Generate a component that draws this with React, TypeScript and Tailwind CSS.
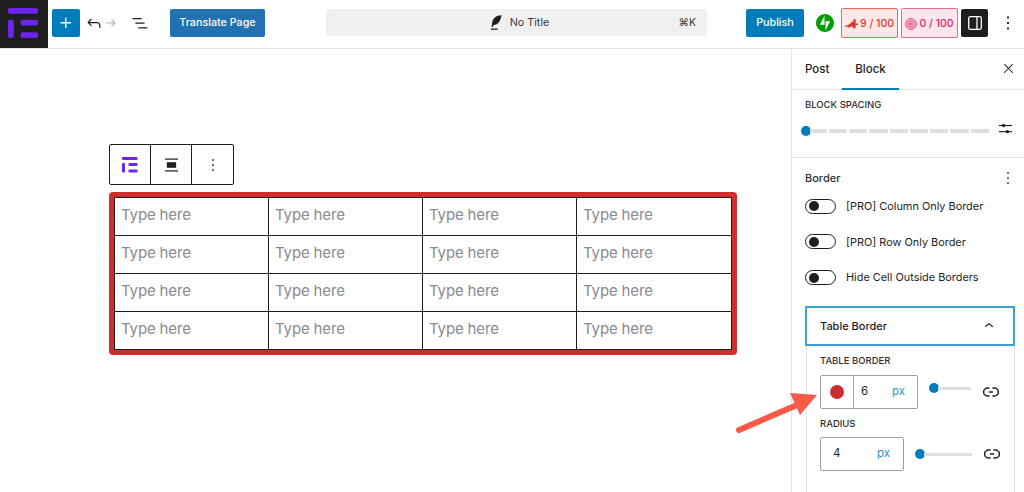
const Logo = ({ className, color }: { className: string; color: string }) => (
  <svg viewBox="0 0 32 32" className={className} fill={color}>
    <rect x="0" y="0" width="31" height="6" rx="2" />
    <rect x="0" y="12" width="6" height="19" rx="2" />
    <rect x="13" y="12" width="18" height="6" rx="2" />
    <rect x="13" y="25" width="18" height="6" rx="2" />
  </svg>
);

const WpIcon = ({ d, className }: { d: string; className: string }) => (
  <svg viewBox="0 0 24 24" className={className} fill="currentColor">
    <path d={d} />
  </svg>
);

const DOTS = "M13 19h-2v-2h2v2zm0-6h-2v-2h2v2zm0-6h-2V5h2v2z";

const LinkIcon = () => (
  <svg viewBox="0 0 16 10" className="w-4 h-[10px] text-[#1e1e1e]" fill="none" stroke="currentColor" strokeWidth="1.5">
    <path d="M6.5 1H4.6a3.6 3.6 0 0 0 0 8h1.9M9.5 1h1.9a3.6 3.6 0 0 1 0 8H9.5M6 5h4" />
  </svg>
);

const Toggle = ({ label }: { label: string }) => (
  <div className="flex items-center h-4 gap-[10px]">
    <div className="w-[31px] h-[15px] rounded-full border border-[#1e1e1e] flex items-center pl-[3px] shrink-0">
      <div className="w-[10px] h-[10px] rounded-full bg-[#1e1e1e]" />
    </div>
    <span className="text-[10.9px] text-[#1e1e1e] whitespace-nowrap">{label}</span>
  </div>
);

const Thumb = () => <div className="w-[10px] h-[10px] rounded-full bg-[#007cba] shrink-0" />;

export default function App() {
  const rows = [0, 1, 2, 3];
  const colClass = ["w-[153px]", "w-[154px] border-l border-[#1e1e1e]", "w-[154px] border-l border-[#1e1e1e]", "flex-1 border-l border-[#1e1e1e]"];
  return (
    <div className="relative w-[1024px] h-[492px] overflow-hidden bg-white font-['Inter',sans-serif] text-[#1e1e1e]">
      <header className="h-[49px] flex items-center border-b border-[#e4e4e4] pb-[2px]">
        <div className="w-[48px] h-[48px] bg-[#1e1e1e] flex items-center justify-center shrink-0 self-start pr-[1px] pb-[2px]">
          <Logo className="w-[31px] h-[31px]" color="#6b25ee" />
        </div>
        <div className="ml-[4px] w-[28px] h-[28px] bg-[#007cba] rounded-[2px] flex items-center justify-center text-white">
          <WpIcon className="w-[22px] h-[22px]" d="M11 12.5V17.5H12.5V12.5H17.5V11H12.5V6H11V11H6V12.5H11Z" />
        </div>
        <WpIcon className="ml-[4px] w-[20px] h-[20px] text-[#1e1e1e]" d="M18.3 11.7c-.6-.6-1.4-.9-2.3-.9H6.7l2.9-3.3-1.1-1-4.5 5L8.5 16l1-1-2.7-2.7H16c.5 0 .9.2 1.3.5 1 1 1 3.4 1 4.5v.3h1.5v-.2c0-1.5 0-4.3-1.5-5.7z" />
        <svg viewBox="0 0 10 10" className="ml-[2px] w-[10px] h-[10px] text-[#b5b5b5]" fill="none" stroke="currentColor" strokeWidth="1.1">
          <path d="M0 5h8.5M5.5 1.5 9 5 5.5 8.5" />
        </svg>
        <WpIcon className="ml-[14px] w-[20px] h-[20px] text-[#1e1e1e]" d="M3 6h11v1.5H3V6Zm3.5 5.5h11V13h-11v-1.5ZM21 17H10v1.5h11V17Z" />
        <div className="ml-[20px] w-[95px] h-[28px] pt-[1px] bg-[#2271b1] rounded-[2px] flex items-center justify-center text-white text-[10.75px] font-medium">
          Translate Page
        </div>
        <div className="ml-[61px] self-start mt-[9px] w-[381px] h-[27px] pt-[1px] bg-[#f0f0f0] rounded-[3px] flex items-center relative text-[#3a3a3a]">
          <div className="flex-1 flex items-center justify-center gap-[8px] text-[10.75px] pl-[6px]">
            <svg viewBox="0 0 14 18" className="w-[12px] h-[17px] -mt-[1px]" fill="#1e1e1e">
              <path d="M13.5 0.500C7 0.500 3 4.500 2.500 9.500L1.800 14L3.300 14.200L4.200 11.800C9 12 12 8 13.500 0.500Z" />
              <rect x="1" y="16" width="8" height="1.500" />
            </svg>
            <span>No Title</span>
          </div>
          <span className="absolute right-[11px] text-[10.5px]">⌘K</span>
        </div>
        <div className="ml-[39px] w-[58px] h-[28px] pt-[1px] bg-[#007cba] rounded-[2px] flex items-center justify-center text-white text-[10.75px] font-medium">
          Publish
        </div>
        <svg viewBox="0 0 32 32" className="ml-[12px] w-[18px] h-[18px]" fill="#069e08">
          <path d="M16 0C7.200 0 0 7.200 0 16s7.200 16 16 16 16-7.200 16-16S24.800 0 16 0zM15 19H7l8-16v16zm2 10V13h8l-8 16z" />
        </svg>
        <div className="ml-[7px] self-start mt-[8px] w-[57px] h-[30px] pt-[1px] bg-[#fde8e8] border border-[#f0635d] rounded-[2px] flex items-center justify-center gap-[2px] text-[#e5332e] text-[10.5px] font-medium">
          <svg viewBox="0 0 14 10" className="w-[13px] h-[10px]" fill="#e5332e">
            <path d="M0 6.500h3L5 4.500h1.500V2.500H9V0h2.500v4.500H14V6H11.500V9.500H8.500V8H5.500L4 9.500 3.500 8H0z" />
          </svg>
          <span className="whitespace-nowrap">9 / 100</span>
        </div>
        <div className="ml-[3px] self-start mt-[8px] w-[57px] h-[30px] pt-[1px] bg-[#fde6ee] border border-[#ee6a96] rounded-[2px] flex items-center justify-center gap-[2px] text-[#e5245f] text-[10.5px] font-medium">
          <svg viewBox="0 0 12 12" className="w-[12px] h-[12px]" fill="none" stroke="#e5245f" strokeWidth="1">
            <circle cx="6" cy="6" r="5.300" />
            <circle cx="6" cy="6" r="3.200" />
            <circle cx="6" cy="6" r="1.200" />
          </svg>
          <span className="whitespace-nowrap">0 / 100</span>
        </div>
        <div className="ml-[3px] w-[27px] h-[28px] bg-[#1e1e1e] rounded-[2px] flex items-center justify-center">
          <svg viewBox="0 0 14 14" className="w-[14px] h-[14px]" fill="none" stroke="white" strokeWidth="1.300">
            <rect x="0.700" y="0.700" width="12.600" height="12.600" rx="1.500" />
            <path d="M9 0.700V13.300" />
          </svg>
        </div>
        <WpIcon className="ml-[9px] w-[22px] h-[22px] text-[#1e1e1e]" d={DOTS} />
      </header>

      <div className="flex h-[443px]">
        <main className="w-[791px] shrink-0 pt-[95px] pl-[109px]">
          <div className="w-[125px] h-[41px] border border-[#1e1e1e] rounded-[2px] flex">
            <div className="w-[41px] border-r border-[#1e1e1e] flex items-center justify-center">
              <Logo className="w-[16px] h-[16px]" color="#6b25ee" />
            </div>
            <div className="w-[41px] border-r border-[#1e1e1e] flex items-center justify-center">
              <svg viewBox="0 0 14 14" className="w-[13px] h-[14px]" fill="#1e1e1e">
                <rect x="0" y="0" width="14" height="1.300" />
                <rect x="2" y="4" width="10" height="6" />
                <rect x="0" y="12.700" width="14" height="1.300" />
              </svg>
            </div>
            <div className="flex-1 flex items-center justify-center">
              <WpIcon className="w-[20px] h-[20px] text-[#1e1e1e]" d={DOTS} />
            </div>
          </div>
          <div className="mt-[7px] w-[628px] h-[163px] border-[5px] border-[#cf2e2e] rounded-[4px]">
            <div className="border border-[#1e1e1e] w-full h-full flex flex-col">
              {rows.map((r) => (
                <div key={r} className={`flex ${r > 0 ? "h-[38px] border-t border-[#1e1e1e]" : "h-[37px]"}`}>
                  {colClass.map((c) => (
                    <div key={c + r} className={`flex items-center pl-[6px] pb-[2px] text-[15px] tracking-[-0.15px] text-[#8a8a8f] ${c}`}>
                      Type here
                    </div>
                  ))}
                </div>
              ))}
            </div>
          </div>
        </main>

        <aside className="flex-1 border-l border-[#e4e4e4] flex flex-col min-w-0">
          <div className="h-[41px] border-b border-[#e4e4e4] flex items-stretch text-[11.5px] font-medium relative">
            <div className="w-[50px] pl-[13px] pt-[2px] flex items-center">Post</div>
            <div className="w-[57px] pt-[2px] flex items-center justify-center border-b-2 border-[#007cba] h-[41px]">Block</div>
            <WpIcon className="absolute right-[8px] top-[12px] w-[15px] h-[15px]" d="M13 11.800l6.100-6.300-1-1-6.100 6.200-6.100-6.200-1 1 6.100 6.300-6.500 6.700 1 1 6.500-6.600 6.500 6.600 1-1z" />
          </div>
          <div className="h-[69px] border-b border-[#e4e4e4] pl-[13px] pt-[9px]">
            <div className="text-[9.5px] font-medium leading-[12px] text-[#2f2f2f]">BLOCK SPACING</div>
            <div className="flex items-center mt-[14px] -ml-[4px] h-[12px]">
              <Thumb />
              <div className="flex gap-[2px] w-[179px] -ml-[1px]">
                <div className="h-[4px] w-[17px] bg-[#dedede]" />
                {[0, 1, 2, 3, 4, 5, 6, 7].map((i) => (
                  <div key={i} className="h-[4px] w-[18.500px] bg-[#dedede]" />
                ))}
              </div>
              <svg viewBox="0 0 14 11" className="ml-[10px] -mt-[5px] w-[13px] h-[11px]" fill="#1e1e1e">
                <rect y="1.700" width="14" height="1.200" />
                <rect y="8.300" width="14" height="1.200" />
                <circle cx="5" cy="2.300" r="1.800" />
                <circle cx="9" cy="8.900" r="1.800" />
              </svg>
            </div>
          </div>

          <div className="pl-[13px] relative flex-1">
            <div className="h-[40px] flex items-center justify-between pr-[6px] text-[11px] font-medium text-[#2f2f2f]">
              <span>Border</span>
              <WpIcon className="w-[20px] h-[20px] text-[#1e1e1e]" d={DOTS} />
            </div>
            <div className="flex flex-col gap-[19.750px]">
              <Toggle label="[PRO] Column Only Border" />
              <Toggle label="[PRO] Row Only Border" />
              <Toggle label="Hide Cell Outside Borders" />
            </div>
            <div className="mt-[20.500px] w-[210px] h-[40px] border-2 border-[#3b9fd0] flex items-center justify-between pl-[13px] pr-[15px] text-[11px] font-medium">
              <span>Table Border</span>
              <WpIcon className="w-[18px] h-[18px] text-[#1e1e1e]" d="M6.500 12.400L12 8l5.500 4.400-.9 1.200L12 10l-4.500 3.600-1-1.200z" />
            </div>
            <div className="ml-[1px] w-[209px] h-[146px] border-x border-[#e4e4e4] pl-[13px] pt-[9px]">
              <div className="text-[9.5px] font-medium leading-[12px] text-[#2f2f2f]">TABLE BORDER</div>
              <div className="flex mt-[8px]">
                <div className="w-[98px] h-[34px] border border-[#a0a0a0] rounded-[2px] flex items-center">
                  <div className="w-[33px] h-full border-r border-[#a0a0a0] flex items-center justify-center">
                    <div className="w-[14px] h-[14px] rounded-full bg-[#cf2e2e]" />
                  </div>
                  <span className="ml-[7px] text-[11.5px] w-[31px]">6</span>
                  <span className="text-[11.5px] text-[#2f93cb]">px</span>
                </div>
                <div className="ml-[11px] mt-[8px] w-[42px] h-[10px] flex items-center">
                  <Thumb />
                  <div className="h-[3px] flex-1 -ml-[1px] bg-[#dedede]" />
                </div>
                <div className="ml-[12px] mt-[12px]"><LinkIcon /></div>
              </div>
              <div className="text-[9.5px] font-medium leading-[12px] text-[#2f2f2f] mt-[9px]">RADIUS</div>
              <div className="flex mt-[7px]">
                <div className="w-[84px] h-[34px] border border-[#a0a0a0] rounded-[2px] flex items-center">
                  <span className="ml-[12px] text-[11.5px] w-[44px]">4</span>
                  <span className="text-[11.5px] text-[#2f93cb]">px</span>
                </div>
                <div className="ml-[11px] mt-[12px] w-[57px] h-[10px] flex items-center">
                  <Thumb />
                  <div className="h-[3px] flex-1 -ml-[1px] bg-[#dedede]" />
                </div>
                <div className="ml-[12px] mt-[12px]"><LinkIcon /></div>
              </div>
            </div>
          </div>
        </aside>
      </div>

      <svg viewBox="0 0 100 60" className="absolute left-[730px] top-[385px] w-[100px] h-[60px]">
        <path d="M9 45 74 17" stroke="#fb5a48" strokeWidth="6" strokeLinecap="round" fill="none" />
        <path d="M87 10 L60 8 L70 30 Z" fill="#fb5a48" />
      </svg>
    </div>
  );
}
